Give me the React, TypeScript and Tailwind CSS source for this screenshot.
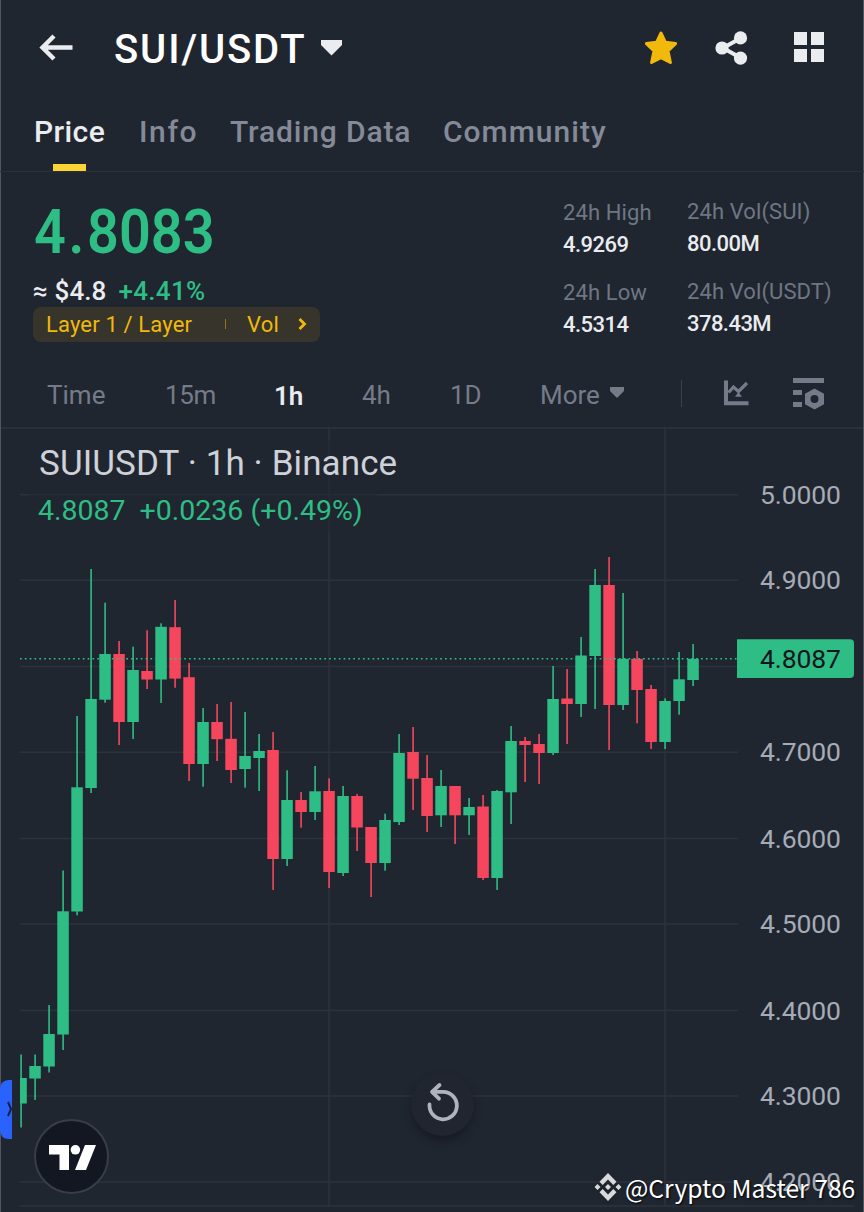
import React from "react";

type Candle = [number, number, number, number, boolean];

const UP = true;
const DOWN = false;
const CHART_TOP = 427;

// wick top, body top, body bottom, wick bottom, direction
const candles: Candle[] = [
  [1054.5, 1078, 1103.5, 1127.5, UP],
  [1054.5, 1066, 1078.5, 1100, UP],
  [1005, 1034, 1066.5, 1072.5, UP],
  [870.5, 911.3, 1034.5, 1050, UP],
  [716, 787.3, 911.5, 915.3, UP],
  [569, 699, 788, 793, UP],
  [602.7, 654, 699.7, 702.7, UP],
  [641, 654, 722, 745, DOWN],
  [646.7, 670, 722, 739, UP],
  [630.3, 671, 679.5, 689, DOWN],
  [623.3, 626.8, 679.5, 703, UP],
  [600, 627.2, 678.6, 687.7, DOWN],
  [663, 677.2, 764, 781, DOWN],
  [708, 722, 764, 786.7, UP],
  [704, 722, 739.2, 761, DOWN],
  [702, 738.8, 770, 783, DOWN],
  [712, 756, 769, 787.7, UP],
  [734, 751, 758, 791, UP],
  [732, 750, 859, 890, DOWN],
  [770.3, 800, 859, 866, UP],
  [792, 800, 812, 827.7, DOWN],
  [766, 791.3, 812, 820, UP],
  [778.3, 791, 872, 888, DOWN],
  [786, 796, 873, 876, UP],
  [794, 796, 827.5, 851, DOWN],
  [827, 827, 863, 897, DOWN],
  [813.7, 820, 863, 870.7, UP],
  [734, 753, 822, 825, UP],
  [727, 752, 778.7, 810, DOWN],
  [755, 778, 816, 832, DOWN],
  [770, 786, 815.3, 827, UP],
  [786, 786, 815.3, 844, DOWN],
  [798, 807, 815.3, 835, UP],
  [795, 806.5, 878, 880, DOWN],
  [790, 791, 878, 890, UP],
  [726, 741, 792.3, 824, UP],
  [737, 741, 745, 782, DOWN],
  [734, 744, 753, 784, DOWN],
  [666, 699, 753, 755, UP],
  [669, 698.5, 704, 744, DOWN],
  [637, 655.5, 704, 717, UP],
  [569, 585, 656, 709, UP],
  [557, 585, 705, 750, DOWN],
  [593, 658.8, 705, 710, UP],
  [651, 658.8, 690, 723.3, DOWN],
  [685, 689, 742, 749, DOWN],
  [698.3, 701, 742, 749, UP],
  [652, 679.3, 701, 714.7, UP],
  [644, 658.8, 680, 686, UP],
];

const levels = [
  { y: 494.8, label: "5.0000" },
  { y: 580.3, label: "4.9000" },
  { y: 666.5, label: "" },
  { y: 752.3, label: "4.7000" },
  { y: 838.5, label: "4.6000" },
  { y: 924, label: "4.5000" },
  { y: 1010.5, label: "4.4000" },
  { y: 1096, label: "4.3000" },
  { y: 1182, label: "4.2000" },
];

function Header() {
  return (
    <header className="flex h-[95px] items-center pl-[39px]">
      <svg className="h-[27px] w-[34px]" viewBox="0 0 34 27" fill="none" stroke="#eaecef" strokeWidth="4.4">
        <path d="M33.5 13.5H4M15 2 3.5 13.5 15 25" />
      </svg>
      <h1 className="ml-[41px] w-[207px] pt-[4px] text-[40px] leading-[48px] font-medium tracking-[1.9px] whitespace-nowrap text-white">
        SUI/USDT
      </h1>
      <svg className="h-[17px] w-[21px]" viewBox="0 0 21 17" fill="#eaecef">
        <path d="M0 1H21V6L10.5 16.5 0 6Z" />
      </svg>
      <svg className="ml-[302px] h-[34px] w-[34px]" viewBox="0 0 34 34" fill="#f0b90b" stroke="#f0b90b" strokeWidth="3" strokeLinejoin="round">
        <path d="M17 2 21.3 11.2 31.6 12.6 24 19.8 26.4 31.5 17 26.6 7.6 31.5 10 19.8 2.4 12.6 12.7 11.2Z" />
      </svg>
      <svg className="ml-[37px] h-[34px] w-[33px]" viewBox="0 0 33 34" fill="#eaecef">
        <path d="M8 17 25 7.5M8 17 25 26.5" stroke="#eaecef" strokeWidth="4.2" />
        <circle cx="7" cy="17" r="6.6" />
        <circle cx="25.5" cy="6.9" r="6.6" />
        <circle cx="25.5" cy="27.1" r="6.6" />
      </svg>
      <div className="mb-px ml-[46px] grid w-[30px] grid-cols-2 gap-1">
        <i className="h-[13px] bg-[#eaecef]" />
        <i className="h-[13px] bg-[#eaecef]" />
        <i className="h-[13px] bg-[#eaecef]" />
        <i className="h-[13px] bg-[#eaecef]" />
      </div>
    </header>
  );
}

function Tabs() {
  return (
    <nav className="flex h-[77px] border-b border-[#2b313b] pl-[34px] text-[30px] leading-[36px] font-medium whitespace-nowrap text-[#848a97]">
      <div className="flex w-[105px] flex-col pt-[19px]">
        <span className="tracking-[0.4px] text-[#eaecef]">Price</span>
        <span className="mt-[14px] ml-[19px] h-[7px] w-[33px] bg-[#fcd535]" />
      </div>
      <span className="w-[91px] pt-[19px] tracking-[1.6px]">Info</span>
      <span className="w-[213px] pt-[19px] tracking-[0.85px]">Trading Data</span>
      <span className="pt-[19px] tracking-[1px]">Community</span>
    </nav>
  );
}

function Stat({ label, value }: { label: string; value: string }) {
  return (
    <div className="flex flex-col whitespace-nowrap">
      <span className="text-[22px] leading-[26px] tracking-[0.1px] text-[#6f7683]">{label}</span>
      <span className="mt-[6px] text-[22px] leading-[26px] font-medium tracking-[-0.55px] text-[#eaecef]">{value}</span>
    </div>
  );
}

function Summary() {
  return (
    <section className="flex h-[188px] pl-[33px]">
      <div className="flex w-[530px] flex-col pt-[24px]">
        <div className="origin-left scale-x-90 pl-px text-[62px] leading-[72px] font-semibold tracking-[0px] text-[#2ebd85]">
          4<span className="mx-[3px]">.</span>8083
        </div>
        <div className="mt-[9px] flex h-[28px] gap-3 text-[26px] leading-[28px] font-medium">
          <span className="tracking-[0.1px] text-[#eaecef]">≈ $4.8</span>
          <span className="tracking-[0.3px] text-[#2ebd85]">+4.41%</span>
        </div>
        <div className="mt-[2px] flex h-[35px] w-[287px] items-center rounded-lg bg-[#37342b] pl-[13px] text-[22px] text-[#f0b90b]">
          <span className="w-[179px] tracking-[0.15px]">Layer 1 / Layer</span>
          <i className="mb-[2px] h-[10px] w-px bg-[#94751a]" />
          <span className="ml-[21px] w-[51px] tracking-[0.2px]">Vol</span>
          <svg className="mb-px h-[12px] w-[9px]" viewBox="0 0 9 12" fill="none" stroke="#f0b90b" strokeWidth="2.8">
            <path d="m1.5 1 5 5-5 5" />
          </svg>
        </div>
      </div>
      <div className="flex w-[124px] flex-col gap-[22px] pt-[28px]">
        <Stat label="24h High" value="4.9269" />
        <Stat label="24h Low" value="4.5314" />
      </div>
      <div className="flex flex-col gap-[22px] pt-[27px]">
        <Stat label="24h Vol(SUI)" value="80.00M" />
        <Stat label="24h Vol(USDT)" value="378.43M" />
      </div>
    </section>
  );
}

function Intervals() {
  return (
    <div className="flex h-[67px] items-center pl-[47px] text-[26px] leading-[30px] whitespace-nowrap text-[#757b88]">
      <span className="w-[118px] pt-[3px]">Time</span>
      <span className="w-[109px] pt-[3px] tracking-[-0.4px]">15m</span>
      <span className="w-[88px] pt-[4px] font-semibold text-[#eaecef]">1h</span>
      <span className="w-[88px] pt-[3px]">4h</span>
      <span className="w-[90px] pt-[3px]">1D</span>
      <span className="w-[70px] pt-[3px]">More</span>
      <svg className="mb-[3px] h-[11px] w-[14px]" viewBox="0 0 14 11" fill="#757b88">
        <path d="M0 0H14V4L7 11 0 4Z" />
      </svg>
      <i className="ml-[57px] h-[27px] w-px bg-[#3b414c]" />
      <svg className="mb-[2px] ml-[42px] h-[26px] w-[25px]" viewBox="0 0 25 26" fill="none" stroke="#757b88">
        <path d="M2 .5V23.3H24.5" strokeWidth="4" />
        <path d="m4.5 12.5 5-5.5 5 4.5L23 3" strokeWidth="3.2" />
        <path d="M14.5 12 18 16.7H11Z" fill="#757b88" stroke="none" />
      </svg>
      <svg className="ml-[44px] h-[32px] w-[32px]" viewBox="0 0 32 32" fill="#757b88">
        <path d="M0 0H31V5H0ZM0 12H9V17H0ZM0 24H9V29H0Z" />
        <path fillRule="evenodd" d="m21.5 10.5 9.5 5.3v10.4l-9.5 5.3-9.5-5.3V15.8ZM21.5 17a4 4 0 1 0 0 8 4 4 0 0 0 0-8Z" />
      </svg>
    </div>
  );
}

function Plot() {
  return (
    <svg className="block h-[785px] w-[864px]" viewBox={`0 ${CHART_TOP} 864 785`}>
      <defs>
        <clipPath id="plot-area">
          <rect x="20" y="427" width="718" height="779" />
        </clipPath>
      </defs>
      <g stroke="#2c323c" strokeWidth="1.5">
        <path d="M1 427.7H863" strokeWidth="2" />
        <path d="M329 428V1205M665 428V1205M20 1206H854" />
        {levels.map((l) => (
          <path key={l.y} d={`M20 ${l.y}H738`} />
        ))}
      </g>
      <rect x="28" y="440" width="349" height="92" fill="#202630" opacity="0.5" />
      <g clipPath="url(#plot-area)">
        {candles.map(([wickTop, top, bottom, wickBottom, up], i) => {
          const x = 21 + i * 14;
          return (
            <g key={i} fill={up ? "#2ebd85" : "#f6465d"}>
              <rect x={x - 0.7} y={wickTop} width="1.6" height={wickBottom - wickTop} />
              <rect x={x - 5.7} y={top} width="11.5" height={bottom - top} />
            </g>
          );
        })}
      </g>
      <path d="M20 658.7H738" stroke="#2ebd85" strokeWidth="1.5" strokeDasharray="1.7 3.13" />
      <g fill="#a6abb6" fontSize="26.5">
        {levels.map((l) =>
          l.label ? (
            <text key={l.y} x="760" y={l.y + 9.1} textLength="81">
              {l.label}
            </text>
          ) : null,
        )}
      </g>
      <path d="M737 639.3H850Q854 639.3 854 643V674Q854 678 850 678H737Z" fill="#2ebd85" />
      <text x="760" y="668" fontSize="26.5" textLength="81" fill="#11161e">
        4.8087
      </text>
    </svg>
  );
}

function Chart() {
  return (
    <section className="relative h-[785px]">
      <Plot />
      <div className="absolute top-[16px] left-[39px] whitespace-nowrap">
        <div className="text-[35px] leading-[41px] tracking-[0.1px] text-[#ced1d8]">SUIUSDT · 1h · Binance</div>
        <div className="mt-[10px] -ml-px flex gap-[14px] text-[28.5px] leading-[34px] text-[#2ebd85]">
          <span>4.8087</span>
          <span>+0.0236 (+0.49%)</span>
        </div>
      </div>
      <svg className="absolute top-[653px] left-0 h-[59px] w-[12px]" viewBox="0 0 12 59">
        <path d="M12 0H9Q0 0 0 10V49Q0 59 9 59H12Z" fill="#2962ff" />
        <path d="m8 22 3 7-3 7" fill="none" stroke="#17203a" strokeWidth="2" />
      </svg>
      <div className="absolute top-[692px] left-[34px] flex h-[75px] w-[75px] items-center justify-center rounded-full border-2 border-[#383d48] bg-[#131722]">
        <svg className="mt-px ml-[2px] h-[25px] w-[48px]" viewBox="0 0 48 25" fill="#fff">
          <path d="M0 0H20V25H10.5V9.5H0ZM36 0H47L37 25H26Z" />
          <circle cx="26.4" cy="4.8" r="4.8" />
        </svg>
      </div>
      <div className="absolute top-[646px] left-[411px] flex h-[63px] w-[63px] items-center justify-center rounded-full bg-[#21252f] shadow-[0_5px_8px_-1px_#151922]">
        <svg className="mb-[5px] h-[40px] w-[34px]" viewBox="425.5 1082 34 40" fill="none" stroke="#afb3be" strokeWidth="3.8" strokeLinecap="round" strokeLinejoin="round">
          <path d="M429 1104.5a13.7 13.7 0 1 0 13.7-12.6H432M439 1085l-7.5 6.9 7 6.8" />
        </svg>
      </div>
      <div className="absolute top-[742px] left-[594px] flex items-center whitespace-nowrap text-white">
        <svg className="h-[28px] w-[28px] drop-shadow-sm" viewBox="0 0 27 28" fill="#d9d9d9">
          <path d="m13.5 0 8.5 8.7-3.2 3.2-5.3-5.3-5.3 5.3L5 8.7ZM13.5 28 5 19.3l3.2-3.2 5.3 5.3 5.3-5.3 3.2 3.2ZM3 11l3 3-3 3-3-3ZM24 11l3 3-3 3-3-3ZM13.5 11l3 3-3 3-3-3Z" />
        </svg>
        <span className="ml-[3px] [font-family:'Noto_Sans_CJK_SC',sans-serif] text-[24.7px] leading-[36px] [text-shadow:1px_1px_2px_#000]">
          @Crypto Master 786
        </span>
      </div>
    </section>
  );
}

export default function App() {
  return (
    <main className="h-[1212px] w-[864px] overflow-hidden bg-[#202630] shadow-[inset_1px_0_#50555f,inset_-1px_0_#50555f] [font-family:Roboto,'Liberation_Sans',sans-serif]">
      <Header />
      <Tabs />
      <Summary />
      <Intervals />
      <Chart />
    </main>
  );
}
